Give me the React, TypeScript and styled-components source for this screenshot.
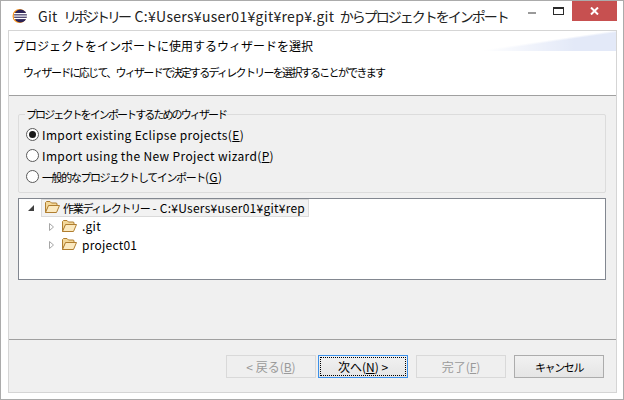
import styled, { createGlobalStyle } from "styled-components";

const GlobalStyle = createGlobalStyle`
  html, body {
    margin: 0;
    padding: 0;
    background: #fff;
  }
  * {
    box-sizing: border-box;
  }
`;

const Win = styled.div`
  width: 624px;
  height: 400px;
  display: flex;
  flex-direction: column;
  background: #fff;
  border: 1px solid #ababab;
  font-family: "Noto Sans CJK JP", "Noto Sans", sans-serif;
  font-size: 12px;
  color: #000;
  overflow: hidden;
`;

const TitleBar = styled.div`
  height: 29px;
  flex: none;
  display: flex;
  align-items: center;
  padding-left: 11px;
`;

const TitleText = styled.div`
  margin-left: 10px;
  flex: 1;
  min-width: 0;
  font-size: 14px;
  letter-spacing: 0.3px;
  word-spacing: 2px;
  color: #222;
  white-space: nowrap;
`;

// the original UI font has narrow kana, so CJK runs get tighter spacing
const Narrow = styled.span<{ $size: number; $track: number }>`
  font-size: ${(props) => props.$size}px;
  letter-spacing: ${(props) => props.$track}px;
`;

const WinBtns = styled.div`
  flex: none;
  display: flex;
  align-self: flex-start;
  align-items: flex-start;
  margin-right: 6px;
`;

const MinMax = styled.div`
  width: 26px;
  height: 20px;
  display: flex;
  align-items: center;
  justify-content: center;
`;

const CloseBtn = styled.div`
  width: 45px;
  height: 20px;
  margin-left: 1px;
  background: #c75050;
  display: flex;
  align-items: center;
  justify-content: center;
`;

const Body = styled.div`
  flex: 1;
  margin: 0 6px 6px 7px;
  background: #f0f0f0;
  border: 1px solid #d5d5d5;
  display: flex;
  flex-direction: column;
  min-height: 0;
`;

const Banner = styled.div`
  height: 65px;
  flex: none;
  background-color: #fff;
  background-image: linear-gradient(to right, #fff, rgba(255, 255, 255, 0) 70%),
    linear-gradient(to bottom right, #fff 48%, #e3e9f8 54%);
  background-repeat: no-repeat;
  background-position: right top;
  background-size: 136px 20px;
  border-bottom: 1px solid #a0a0a0;
  padding: 6px 0 0 4px;
`;

const BannerTitle = styled.div`
  line-height: 18px;
`;

const BannerText = styled.div`
  margin: 8px 0 0 10px;
  line-height: 17px;
  white-space: nowrap;
`;

const Main = styled.div`
  flex: 1;
  padding: 10px 10px 0 9px;
  display: flex;
  flex-direction: column;
  min-height: 0;
`;

const Group = styled.fieldset`
  margin: 0;
  height: 87px;
  flex: none;
  padding: 2px 0 0 7px;
  border: 1px solid #dcdcdc;
  border-radius: 2px;
  display: flex;
  flex-direction: column;
`;

const GroupLegend = styled.legend`
  margin-left: -1px;
  padding: 0 1px;
  line-height: 16px;
  white-space: nowrap;
`;

const RadioRow = styled.div`
  height: 21px;
  display: flex;
  align-items: center;
  gap: 3px;
  font-size: 12px;
  letter-spacing: 0.36px;
  white-space: nowrap;
`;

const RadioMark = styled.span<{ $checked?: boolean }>`
  width: 13px;
  height: 13px;
  flex: none;
  border: 1px solid #5a5a5a;
  border-radius: 50%;
  background: #fff;
  display: flex;
  align-items: center;
  justify-content: center;
  &::after {
    content: "";
    width: 7px;
    height: 7px;
    border-radius: 50%;
    background: ${(props) => (props.$checked ? "#1a1a1a" : "transparent")};
  }
`;

const Tree = styled.div`
  margin-top: 5px;
  height: 82px;
  flex: none;
  background: #fff;
  border: 1px solid #828790;
`;

const TreeRow = styled.div<{ $depth: number }>`
  height: 18.5px;
  display: flex;
  align-items: center;
  padding-left: ${(props) => 8 + props.$depth * 20}px;
`;

const TreeLabel = styled.div<{ $selected?: boolean }>`
  display: flex;
  align-items: center;
  gap: ${(props) => (props.$selected ? 3 : 5)}px;
  height: 18px;
  margin-left: ${(props) => (props.$selected ? 5 : 3)}px;
  padding: 0 4px 2px ${(props) => (props.$selected ? 3 : 2)}px;
  white-space: nowrap;
  font-size: 12px;
  letter-spacing: 0.25px;
  background: ${(props) => (props.$selected ? "#f2f2f2" : "transparent")};
  outline: ${(props) => (props.$selected ? "1px solid #dadada" : "none")};
  outline-offset: -1px;
`;

const Footer = styled.div`
  height: 53px;
  flex: none;
  border-top: 1px solid #a0a0a0;
  padding: 15px 12px 0 0;
  display: flex;
  justify-content: flex-end;
`;

const Btn = styled.div<{ $focused?: boolean; $disabled?: boolean }>`
  width: 90px;
  height: 23px;
  margin-left: ${(props) => (props.$focused ? 2 : 8)}px;
  display: flex;
  align-items: center;
  justify-content: center;
  font-size: 12px;
  white-space: pre;
  position: relative;
  color: ${(props) => (props.$disabled ? "#9a9a9a" : "#000")};
  border: 1px solid
    ${(props) =>
      props.$disabled ? "#d9d9d9" : props.$focused ? "#3c90e8" : "#acacac"};
  background: ${(props) =>
    props.$disabled ? "#efefef" : "linear-gradient(#f1f1f1, #e5e5e5)"};
  &::after {
    content: "";
    position: absolute;
    inset: 1px;
    border: ${(props) => (props.$focused ? "1px dotted #000" : "none")};
  }
`;

const Key = styled.span`
  text-decoration: underline;
  text-underline-offset: 1px;
`;

function EclipseIcon() {
  return (
    <svg width="16" height="16" viewBox="0 0 16 16">
      <circle cx="7.5" cy="8" r="7" fill="#f7941e" />
      <circle cx="8.5" cy="8" r="6.5" fill="#2c2255" />
      <rect x="2" y="5" width="13" height="1.3" fill="#fff" />
      <rect x="1.8" y="7.4" width="13.4" height="1.3" fill="#fff" />
      <rect x="2" y="9.8" width="13" height="1.3" fill="#fff" />
    </svg>
  );
}

function FolderIcon() {
  return (
    <svg width="16" height="14" viewBox="0 0 16 14" style={{ flex: "none" }}>
      <path
        d="M1.5 12.5V2.5L2.5 1.5H6L7.5 3H12.5L13 4V5.5H5L1.5 12.5Z"
        fill="#f3d89a"
        stroke="#b07e30"
      />
      <path
        d="M1.5 12.5L4.5 5.5H15.5L12.5 12.5H1.5Z"
        fill="#fbe9c0"
        stroke="#b07e30"
      />
    </svg>
  );
}

function Twisty({ open }: { open?: boolean }) {
  return (
    <svg width="9" height="10" viewBox="0 0 9 10" style={{ flex: "none" }}>
      {open ? (
        <path d="M1 8H7V2Z" fill="#404040" />
      ) : (
        <path d="M2.5 1.5L6.5 5L2.5 8.5Z" fill="#fff" stroke="#a6a6a6" />
      )}
    </svg>
  );
}

export default function App() {
  return (
    <>
      <GlobalStyle />
      <Win>
        <TitleBar>
          <EclipseIcon />
          <TitleText>
            Git <Narrow $size={14} $track={-3}>リポジトリー</Narrow>{"  "}C:¥Users¥user01¥git¥rep¥.git{" "}
            <Narrow $size={14} $track={-2}>からプロジェクトをインポート</Narrow>
          </TitleText>
          <WinBtns>
            <MinMax>
              <svg width="10" height="10" viewBox="0 0 10 10">
                <rect x="1" y="6" width="8" height="2" fill="#9a9a9a" />
              </svg>
            </MinMax>
            <MinMax>
              <svg width="11" height="8" viewBox="0 0 11 8">
                <rect x="0.5" y="1" width="10" height="6.5" fill="none" stroke="#2a2a2a" />
                <rect x="0" y="0" width="11" height="2" fill="#2a2a2a" />
              </svg>
            </MinMax>
            <CloseBtn>
              <svg width="9" height="8" viewBox="0 0 9 8">
                <path d="M1 0.5L8 7.5M8 0.5L1 7.5" stroke="#fff" strokeWidth="2" />
              </svg>
            </CloseBtn>
          </WinBtns>
        </TitleBar>
        <Body>
          <Banner>
            <BannerTitle>プロジェクトをインポートに使用するウィザードを選択</BannerTitle>
            <BannerText>
              <Narrow $size={11} $track={-1.7}>
                ウィザードに応じて、ウィザードで決定するディレクトリーを選択することができます
              </Narrow>
            </BannerText>
          </Banner>
          <Main>
            <Group>
              <GroupLegend>
                <Narrow $size={11} $track={-1.9}>
                  プロジェクトをインポートするためのウィザード
                </Narrow>
              </GroupLegend>
              <RadioRow>
                <RadioMark $checked />
                <span>
                  Import existing Eclipse projects(<Key>E</Key>)
                </span>
              </RadioRow>
              <RadioRow>
                <RadioMark />
                <span>
                  Import using the New Project wizard(<Key>P</Key>)
                </span>
              </RadioRow>
              <RadioRow>
                <RadioMark />
                <span>
                  <Narrow $size={11} $track={-1.4}>
                    一般的なプロジェクトしてインポート
                  </Narrow>
                  (<Key>G</Key>)
                </span>
              </RadioRow>
            </Group>
            <Tree>
              <TreeRow $depth={0}>
                <Twisty open />
                <TreeLabel $selected>
                  <FolderIcon />
                  <span>
                    <Narrow $size={11} $track={-1.3}>作業ディレクトリー</Narrow> - C:¥Users¥user01¥git¥rep
                  </span>
                </TreeLabel>
              </TreeRow>
              <TreeRow $depth={1}>
                <Twisty />
                <TreeLabel>
                  <FolderIcon />
                  .git
                </TreeLabel>
              </TreeRow>
              <TreeRow $depth={1}>
                <Twisty />
                <TreeLabel>
                  <FolderIcon />
                  project01
                </TreeLabel>
              </TreeRow>
            </Tree>
          </Main>
          <Footer>
            <Btn $disabled>
              &lt; 戻る(<Key>B</Key>)
            </Btn>
            <Btn $focused>
              次へ(<Key>N</Key>) &gt;
            </Btn>
            <Btn $disabled>
              完了(<Key>F</Key>)
            </Btn>
            <Btn>
              <Narrow $size={11} $track={-1.4}>キャンセル</Narrow>
            </Btn>
          </Footer>
        </Body>
      </Win>
    </>
  );
}
